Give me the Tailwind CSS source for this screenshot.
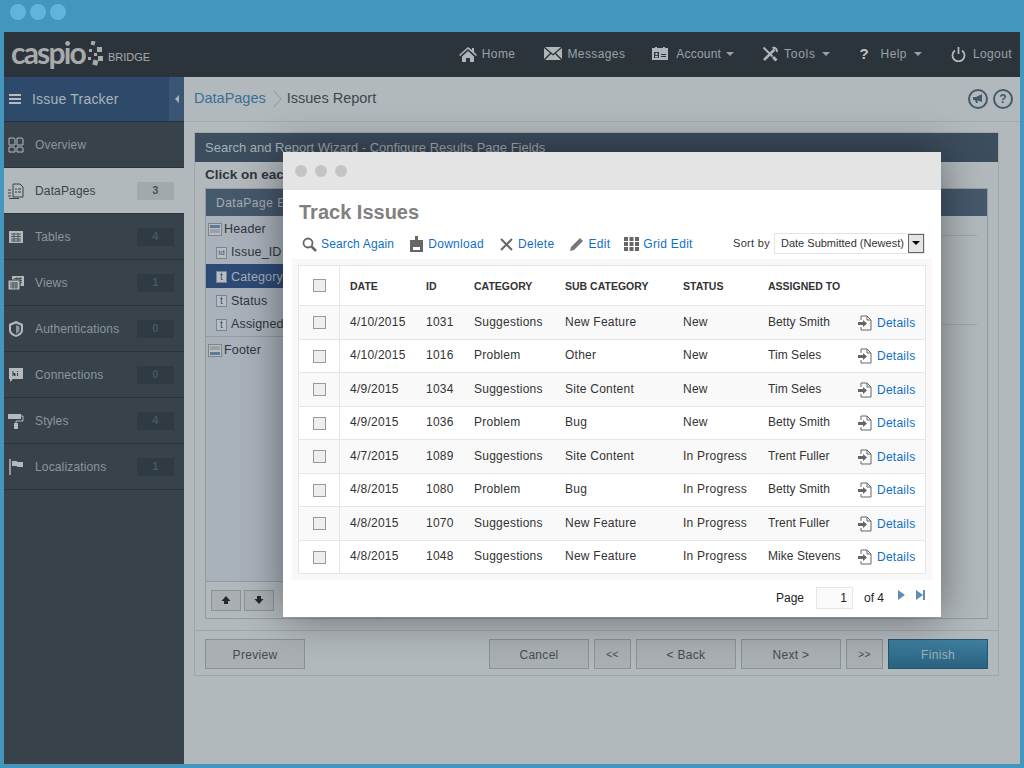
<!DOCTYPE html>
<html lang="en">
<head>
<meta charset="UTF-8">
<title>Caspio Bridge - Track Issues</title>
<script src="https://cdn.jsdelivr.net/npm/@tailwindcss/browser@4"></script>
</head>
<body class="m-0 font-['Liberation_Sans',Arial,sans-serif]">
<div class="relative w-[1024px] h-[768px] overflow-hidden bg-[#4397bf] flex flex-col px-1 pb-1">
  <!-- window dots -->
  <div class="h-8 shrink-0 flex items-center gap-1 pl-1.5 pb-2">
    <span class="w-4 h-4 rounded-full bg-[#5fb5de]"></span>
    <span class="w-4 h-4 rounded-full bg-[#5fb5de]"></span>
    <span class="w-4 h-4 rounded-full bg-[#5fb5de]"></span>
  </div>

  <!-- top nav -->
  <div class="h-[45px] shrink-0 bg-[#2c343b] flex items-center justify-between text-[#9aa2a6] text-[12px] tracking-[0.4px]">
    <div class="flex items-center pl-[7px]">
      <span class="text-[30px] leading-none font-['Lato',sans-serif] font-bold tracking-[-1.8px] text-[#a7abab] -mt-[5px]">caspio</span>
      <svg width="16" height="28" viewBox="0 0 16 28" class="ml-[3px] fill-[#a7abab]"><rect x="3" y="0" width="4" height="4" transform="rotate(15 5 2)"/><rect x="9" y="6" width="5" height="5"/><rect x="1" y="8" width="3" height="3"/><rect x="6" y="12" width="3" height="3"/><rect x="10" y="15" width="5" height="5"/><rect x="0" y="16" width="3" height="3"/><rect x="5" y="19" width="5" height="5" transform="rotate(15 7 21)"/></svg>
      <span class="ml-[4px] mt-[6px] text-[11px] tracking-normal text-[#a7abab]">BRIDGE</span>
    </div>
    <div class="flex items-center pr-2 pb-[2px]">
      <svg width="18" height="16" viewBox="0 0 18 16" class="fill-[#b0b5b7]"><path d="M9 1 0 9l1 1 8-7 8 7 1-1-3-3V2h-2v2z"/><path d="M3 10.500 9 5l6 5.500V16h-4v-4H7v4H3z"/></svg>
      <span class="ml-[5px]">Home</span>
      <svg width="18" height="13" viewBox="0 0 18 13" class="ml-[29px] fill-[#b0b5b7]"><path d="M1 0h16L9 7z"/><path d="M0 1l6 5-6 6zM18 1l-6 5 6 6zM7 7l2 1.500L11 7l6 6H1z"/></svg>
      <span class="ml-[5px]">Messages</span>
      <svg width="16" height="13" viewBox="0 0 16 13" class="ml-[27px] fill-[#b0b5b7]"><path fill-rule="evenodd" d="M0 1h3V0h2v1h6V0h2v1h3v12H0zM2 5v6h5V5zm7 2v1h5V7zm0 2v1h5V9z"/><circle cx="4.500" cy="7" r="1.300"/><rect x="3" y="9" width="3" height="1.500"/></svg>
      <span class="ml-[8px] tracking-[0.2px]">Account</span>
      <span class="ml-[5px] w-0 h-0 border-x-[4px] border-x-transparent border-t-[4px] border-t-[#9aa2a6]"></span>
      <svg width="16" height="16" viewBox="0 0 16 16" class="ml-[28px] stroke-[#b0b5b7] fill-none"><path d="M1.500 1.500l9 9" stroke-width="2"/><path d="M11 11l3.500 3.500" stroke-width="3"/><path d="M12.500 3.500 2 14" stroke-width="2.500"/><path d="M10.500 2a3 3 0 0 1 4 4" stroke-width="2"/></svg>
      <span class="ml-[6px] tracking-[0.7px]">Tools</span>
      <span class="ml-[6px] w-0 h-0 border-x-[4px] border-x-transparent border-t-[4px] border-t-[#9aa2a6]"></span>
      <span class="ml-[30px] w-[10px] text-[15px] leading-none font-bold text-[#c0c4c5] tracking-normal">?</span>
      <span class="ml-[11px]">Help</span>
      <span class="ml-[7px] w-0 h-0 border-x-[4px] border-x-transparent border-t-[4px] border-t-[#9aa2a6]"></span>
      <svg width="15" height="16" viewBox="0 0 15 16" class="ml-[29px] fill-none stroke-[#b8bcbe]" stroke-width="1.700"><path d="M4 4.500a6 6 0 1 0 7 0"/><path d="M7.500 1v7"/></svg>
      <span class="ml-[7px]">Logout</span>
    </div>
  </div>

  <div class="flex-1 flex min-h-0">
    <!-- sidebar -->
    <aside class="w-[180px] shrink-0 bg-[#37424a] flex flex-col">
      <div class="h-[45px] shrink-0 flex bg-[#2d4a6b] border-b border-[#25323d]">
        <div class="flex-1 flex items-center pl-[5px] text-[#aab3b9] text-[14px] tracking-[0.2px]">
          <span class="w-3 flex flex-col gap-[2px]"><i class="h-[2px] bg-[#b7bcbf]"></i><i class="h-[2px] bg-[#b7bcbf]"></i><i class="h-[2px] bg-[#b7bcbf]"></i></span>
          <span class="ml-[11px]">Issue Tracker</span>
        </div>
        <div class="w-[15px] bg-[#3b5574] flex items-center justify-center"><span class="w-0 h-0 border-y-[4px] border-y-transparent border-r-[4px] border-r-[#aab3b9]"></span></div>
      </div>
      <div id="nav"></div>
    </aside>

    <!-- content -->
    <main class="flex-1 min-w-0 bg-[#b2b9bd] flex flex-col">
      <div class="h-[45px] shrink-0 border-b border-[#a3a9ac] flex items-center pl-[10px] pr-[7px] pb-px text-[14.5px]">
        <span class="text-[#3a6f94]">DataPages</span>
        <svg width="10" height="20" viewBox="0 0 10 20" class="ml-[7px] fill-none stroke-[#8f979b]"><path d="M1 2l7 8-7 8"/></svg>
        <span class="ml-[4px] text-[#3f474c]">Issues Report</span>
        <div class="ml-auto flex gap-[5px] items-center text-[#46586a]">
          <span class="w-5 h-5 rounded-full border-2 border-[#46586a] flex items-center justify-center"><svg width="12" height="11" viewBox="0 0 12 11" class="fill-[#46586a]"><path d="M1 4h3l6-3v8L4 7H1z"/><path d="M3 7h2l1 3H4z"/></svg></span>
          <span class="w-5 h-5 rounded-full border-2 border-[#46586a] flex items-center justify-center text-[12px] font-bold leading-none">?</span>
        </div>
      </div>

      <div class="mt-[10px] ml-[10px] w-[805px] h-[544px] border border-[#a0a6a9] flex flex-col">
        <div class="h-[29px] shrink-0 bg-[#3c4d5e] text-[#a6afb6] text-[13px] pl-[10px] pt-[8px] leading-none">Search and Report Wizard - Configure Results Page Fields</div>
        <div class="h-[26px] shrink-0 pl-[10px] pt-[6px] font-bold text-[13.5px] leading-none text-[#30363a]">Click on each</div>
        <div class="mx-[10px] h-[431px] shrink-0 border border-[#949a9d] flex flex-col">
          <div class="h-[27px] shrink-0 bg-[#46586c] text-[#a6afb6] text-[12px] tracking-[0.5px] pl-[10px] flex items-center">DataPage Elements</div>
          <div class="flex-1 flex min-h-0 text-[#30363a] text-[12.5px] tracking-[0.15px]">
            <div class="w-[172px] shrink-0 bg-[#a9b1ba] border-r border-[#949a9d] flex flex-col">
              <div class="h-[24px] flex items-center pl-[2px] pt-[2px] gap-[2px]"><svg width="14" height="13" viewBox="0 0 14 13"><rect x=".5" y=".5" width="13" height="12" fill="#b8bec2" stroke="#7d858a"/><rect x="2" y="2" width="10" height="3" fill="#5d7a9c"/><path d="M2 7h10M2 9h10" stroke="#7d858a"/></svg>Header</div>
              <div class="h-[24px] flex items-center pl-[10px] pt-px gap-[4px]"><span class="w-[11px] h-[12px] border border-[#7d858a] bg-[#b8bec2] text-[#2d4f8a] text-[8px] leading-none flex items-center justify-center">id</span>Issue_ID</div>
              <div class="h-[24px] flex items-center pl-[10px] pt-[2px] gap-[4px] bg-[#2d4a76] text-[#a6afb6]"><span class="w-[11px] h-[12px] border border-[#7d858a] bg-[#b8bec2] text-[#2d4f8a] text-[10px] leading-none flex items-center justify-center">t</span>Category</div>
              <div class="h-[24px] flex items-center pl-[10px] pt-[2px] gap-[4px]"><span class="w-[11px] h-[12px] border border-[#7d858a] bg-[#b8bec2] text-[#2d4f8a] text-[10px] leading-none flex items-center justify-center">t</span>Status</div>
              <div class="h-[25px] flex items-center pl-[10px] pt-px gap-[4px] border-b border-[#949a9d]"><span class="w-[11px] h-[12px] border border-[#7d858a] bg-[#b8bec2] text-[#2d4f8a] text-[10px] leading-none flex items-center justify-center">t</span>Assigned_To</div>
              <div class="h-[24px] flex items-center pl-[2px] pt-[2px] gap-[2px]"><svg width="14" height="13" viewBox="0 0 14 13"><rect x=".5" y=".5" width="13" height="12" fill="#b8bec2" stroke="#7d858a"/><path d="M2 3h10M2 5h10" stroke="#7d858a"/><rect x="2" y="8" width="10" height="3" fill="#5d7a9c"/></svg>Footer</div>
              <div class="mt-auto h-[37px] bg-[#b2b9bd] border-t border-[#949a9d] flex items-center pl-[5px] gap-[3px]">
                <span class="w-[30px] h-[21px] border border-[#8b9194] bg-[#a9afb2] flex items-center justify-center"><svg width="10" height="10" viewBox="0 0 10 10" class="fill-[#23292d]"><path d="M5 1l4.500 5H7v3H3V6H.5z"/></svg></span>
                <span class="w-[30px] h-[21px] border border-[#8b9194] bg-[#a9afb2] flex items-center justify-center"><svg width="10" height="10" viewBox="0 0 10 10" class="fill-[#23292d]"><path d="M5 9 .5 4H3V1h4v3h2.500z"/></svg></span>
              </div>
            </div>
            <div class="flex-1 pt-[19px] pl-[60px] pr-[10px]">
              <div class="h-[90px] border-t border-b border-[#a0a6a9]"></div>
            </div>
          </div>
        </div>
        <div class="mt-[11px] border-t border-[#a0a6a9] flex-1 px-[10px] pt-[8px] flex text-[12px] tracking-[0.3px] text-[#454c50]">
          <span class="shrink-0 w-[100px] h-[30px] border border-[#8b9194] bg-[#a9afb2] pt-px flex items-center justify-center">Preview</span>
          <span class="shrink-0 ml-[184px] w-[100px] h-[30px] border border-[#8b9194] bg-[#a9afb2] pt-px flex items-center justify-center">Cancel</span>
          <span class="shrink-0 ml-[5px] w-[37px] h-[30px] border border-[#8b9194] bg-[#a9afb2] pt-px flex items-center justify-center text-[10px]">&lt;&lt;</span>
          <span class="shrink-0 ml-[5px] w-[100px] h-[30px] border border-[#8b9194] bg-[#a9afb2] pt-px flex items-center justify-center">&lt; Back</span>
          <span class="shrink-0 ml-[5px] w-[100px] h-[30px] border border-[#8b9194] bg-[#a9afb2] pt-px flex items-center justify-center">Next &gt;</span>
          <span class="shrink-0 ml-[5px] w-[37px] h-[30px] border border-[#8b9194] bg-[#a9afb2] pt-px flex items-center justify-center text-[10px]">&gt;&gt;</span>
          <span class="shrink-0 ml-[5px] w-[100px] h-[30px] border border-[#22556f] bg-gradient-to-b from-[#3f7f9f] to-[#2a627f] text-[#9eb0ba] pt-px flex items-center justify-center">Finish</span>
        </div>
      </div>
    </main>
  </div>

  <!-- modal -->
  <div class="absolute left-[283px] top-[152px] w-[658px] h-[465px] bg-white shadow-[0_0_40px_rgba(0,0,0,0.45)] flex flex-col">
    <div class="h-[38px] shrink-0 bg-[#e4e4e4] flex items-center gap-2 pl-3">
      <span class="w-3 h-3 rounded-full bg-[#c4c4c4]"></span>
      <span class="w-3 h-3 rounded-full bg-[#c4c4c4]"></span>
      <span class="w-3 h-3 rounded-full bg-[#c4c4c4]"></span>
    </div>
    <div class="h-[42px] shrink-0 pl-4 pt-[12px] text-[20px] leading-none font-bold text-[#808080]">Track Issues</div>
    <div class="h-[27px] shrink-0 flex items-center pl-[19px] pr-[16px] pb-[3px] text-[12px] tracking-[0.3px] text-[#0f6fc6]">
      <svg width="15" height="15" viewBox="0 0 15 15" class="fill-none stroke-[#666]"><circle cx="6" cy="6" r="4.500" stroke-width="1.800"/><path d="M9.500 9.500l4.500 4.500" stroke-width="2.500"/></svg>
      <span class="ml-[4px] tracking-[0.15px]">Search Again</span>
      <svg width="13" height="16" viewBox="0 0 13 16" class="ml-[16px] fill-[#666]"><path fill-rule="evenodd" d="M0 4h5V0h3v4h5v12H0zM3 11v3h7v-3z"/></svg>
      <span class="ml-[5px]">Download</span>
      <svg width="13" height="13" viewBox="0 0 13 13" class="ml-[16px] fill-none stroke-[#666]" stroke-width="2"><path d="M1 1l11 11M12 1 1 12"/></svg>
      <span class="ml-[5px]">Delete</span>
      <svg width="15" height="15" viewBox="0 0 15 15" class="ml-[15px] fill-[#777]"><path d="M11 1l3 3-9 9-4 1 1-4z"/></svg>
      <span class="ml-[4px]">Edit</span>
      <svg width="15" height="14" viewBox="0 0 15 14" class="ml-[14px] fill-[#666]"><path d="M0 0h4v4H0zM5.500 0h4v4h-4zM11 0h4v4h-4zM0 5h4v4H0zM5.500 5h4v4h-4zM11 5h4v4h-4zM0 10h4v4H0zM5.500 10h4v4h-4zM11 10h4v4h-4z"/></svg>
      <span class="ml-[4px]">Grid Edit</span>
      <span class="ml-auto text-[11px] text-[#333] -mt-[2px]">Sort by</span>
      <span class="shrink-0 ml-[4px] w-[151px] h-[21px] -mt-[2px] border border-[#e4e4e4] flex items-center justify-between pl-[6px] text-[11px] tracking-normal whitespace-nowrap text-[#333]">Date Submitted (Newest)<span class="w-4 h-[19px] border border-[#666] bg-[#e4e4e4] flex items-center justify-center"><i class="w-0 h-0 border-x-[4px] border-x-transparent border-t-[4px] border-t-black"></i></span></span>
    </div>
    <div class="mx-[9px] bg-[#f8f8f8] p-[6px] h-[321px] shrink-0">
      <div class="border-t border-x border-[#e6e6e6] bg-white text-[12px] tracking-[0.25px] text-[#333] h-[309px]">
        <div class="flex items-center h-[40px] border-b border-[#e6e6e6]">
          <span class="w-[41px] h-full border-r border-[#e6e6e6] flex items-center justify-center"><i class="w-[13px] h-[13px] border border-[#999] bg-[#eee]"></i></span>
          <div class="flex flex-1 items-center pt-[2px] font-bold text-[10.5px] tracking-normal text-[#333]">
            <span class="w-[86px] pl-[10px]">DATE</span>
            <span class="w-[48px]">ID</span>
            <span class="w-[91px]">CATEGORY</span>
            <span class="w-[118px]">SUB CATEGORY</span>
            <span class="w-[85px]">STATUS</span>
            <span>ASSIGNED TO</span>
          </div>
        </div>
        <div id="rows"></div>
      </div>
    </div>
    <div class="flex-1 flex items-center justify-end pr-[16px] pb-[2px] text-[12px] text-[#222]">
      <span>Page</span>
      <span class="ml-[12px] w-[37px] h-[22px] border border-[#e6e6e6] bg-[#fafafa] flex items-center justify-end pr-[5px]">1</span>
      <span class="ml-[11px]">of 4</span>
      <span class="ml-[14px] w-0 h-0 border-y-[5px] border-y-transparent border-l-[7px] border-l-[#5f8db4] -mt-[6px]"></span>
      <span class="ml-[11px] flex items-center -mt-[6px]"><i class="w-0 h-0 border-y-[5px] border-y-transparent border-l-[7px] border-l-[#5f8db4]"></i><i class="w-[2px] h-[10px] bg-[#5f8db4]"></i></span>
    </div>
  </div>
</div>

<script>
  const navIcons = {
    Overview: '<path d="M1 1h5l1 1v6H1zM9 1h5l1 1v6H9zM1 10h5l1 1v4H1zM9 10h5l1 1v4H9z" fill="none" stroke="#b4b9bb"/>',
    DataPages: '<path d="M5 1h7l3 3v10H5z" fill="none" stroke="#3a4248"/><path d="M7 6h2M10 6h3M7 9h2M10 9h3M0 7h3M0 10h3M0 13h3M1 15.500h10" stroke="#3a4248" fill="none"/>',
    Tables: '<rect x="1" y="2" width="14" height="12" fill="#b4b9bb"/><path d="M3 5h10M3 7.500h10M3 10h10M3 12h10M6 4v9M10 4v9" stroke="#37424a" stroke-width=".8"/>',
    Views: '<rect x="4" y="1" width="12" height="10" fill="#b4b9bb"/><path d="M6 3.500h8M6 5.500h8M6 7.500h8M9 2v8M12 2v8" stroke="#37424a" stroke-width=".8"/><rect x="0" y="5" width="12" height="10" fill="#b4b9bb" stroke="#37424a"/><path d="M2 8h8M2 10h8M2 12h8M5 7v7M8 7v7" stroke="#37424a" stroke-width=".8"/>',
    Authentications: '<path d="M8 0l7 3v6c0 4-4 6-7 7-3-1-7-3-7-7V3z" fill="#b4b9bb"/><path d="M8 2.500l5 2v4.500c0 2.500-3 4-5 5-2-1-5-2.500-5-5V4.500z" fill="#37424a"/><path d="M8 4l3.500 1.500v3.500c0 2-2 3-3.500 3.500z" fill="#8c969c"/>',
    Connections: '<path d="M1 1h14v11H5l-3 3v-3H1z" fill="#b4b9bb"/><path d="M5 4v5M5 6.500h2v2.500M9.500 4v1M9.500 6v3" stroke="#37424a"/>',
    Styles: '<path d="M0 1h13v5H0z" fill="#b4b9bb"/><path d="M13 3h2v5H8v3" fill="none" stroke="#b4b9bb"/><rect x="6" y="10" width="4" height="6" fill="#b4b9bb"/>',
    Localizations: '<path d="M2 0v16" stroke="#b4b9bb" stroke-width="1.500"/><path d="M4 2h4l2 1h5v5h-5L8 7H4z" fill="#b4b9bb"/>'
  };
  const nav = [['Overview', null], ['DataPages', 3], ['Tables', 4], ['Views', 1], ['Authentications', 0], ['Connections', 0], ['Styles', 4], ['Localizations', 1]];
  document.getElementById('nav').innerHTML = nav.map(([name, count]) => {
    const active = name === 'DataPages';
    const badge = count === null ? '' : `<span class="ml-auto mr-[10px] w-[37px] h-[18px] flex items-center justify-center text-[11px] font-bold ${active ? 'bg-[#a2a9ad] text-[#4b5358]' : 'bg-[#2f3a42] text-[#465662]'}">${count}</span>`;
    return `<div class="h-[46px] flex items-center pl-[4px] border-b border-[#2c353b] text-[12px] tracking-[0.15px] ${active ? 'bg-[#b2b9bd] text-[#3a4248]' : 'text-[#8c969c]'}">
      <svg width="16" height="16" viewBox="0 0 16 16" class="shrink-0">${navIcons[name]}</svg>
      <span class="ml-[11px]">${name}</span>${badge}</div>`;
  }).join('');

  const rows = [
    ['4/10/2015', 1031, 'Suggestions', 'New Feature', 'New', 'Betty Smith'],
    ['4/10/2015', 1016, 'Problem', 'Other', 'New', 'Tim Seles'],
    ['4/9/2015', 1034, 'Suggestions', 'Site Content', 'New', 'Tim Seles'],
    ['4/9/2015', 1036, 'Problem', 'Bug', 'New', 'Betty Smith'],
    ['4/7/2015', 1089, 'Suggestions', 'Site Content', 'In Progress', 'Trent Fuller'],
    ['4/8/2015', 1080, 'Problem', 'Bug', 'In Progress', 'Betty Smith'],
    ['4/8/2015', 1070, 'Suggestions', 'New Feature', 'In Progress', 'Trent Fuller'],
    ['4/8/2015', 1048, 'Suggestions', 'New Feature', 'In Progress', 'Mike Stevens']
  ];
  document.getElementById('rows').innerHTML = rows.map((r, i) => `
    <div class="flex items-center border-b border-[#e6e6e6] ${i % 2 ? 'h-[33px] bg-white' : 'h-[34px] bg-[#f9f9f9]'}">
      <span class="w-[41px] h-full border-r border-[#e6e6e6] flex items-center justify-center"><i class="w-[13px] h-[13px] border border-[#999] bg-[#eee]"></i></span>
      <div class="flex flex-1 items-center pb-[2px]">
        <span class="w-[86px] pl-[10px]">${r[0]}</span>
        <span class="w-[48px]">${r[1]}</span>
        <span class="w-[91px]">${r[2]}</span>
        <span class="w-[118px]">${r[3]}</span>
        <span class="w-[85px]">${r[4]}</span>
        <span class="w-[90px] tracking-[0.05px]">${r[5]}</span>
        <svg width="14" height="16" viewBox="0 0 14 16" class="mt-[2px] fill-none stroke-[#666]"><path d="M3 5V1h6l4 4v10H3v-3"/><path d="M9 1v4h4" /><path d="M0 7h5V5l4 3.500L5 12v-2H0z" fill="#666" stroke="none"/></svg>
        <span class="ml-[5px] mt-[2px] text-[#0f6fc6]">Details</span>
      </div>
    </div>`).join('');
</script>
</body>
</html>
